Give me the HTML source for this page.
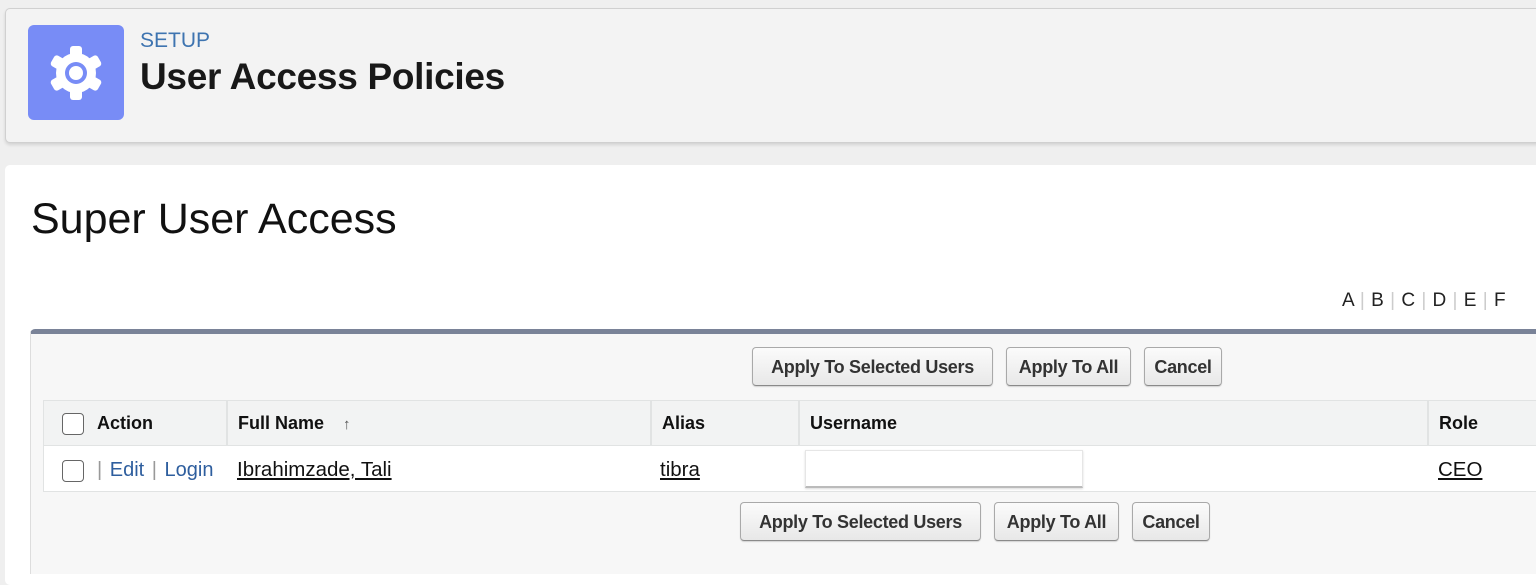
<!DOCTYPE html>
<html><head><style>
body{margin:0;width:1536px;height:561px;background:#efefef;position:relative;overflow:hidden;font-family:"Liberation Sans",Arial,sans-serif;}
.a{position:absolute;}
.btn{position:absolute;height:39px;border:1px solid #a9a9a9;border-bottom-color:#8a8a8a;border-radius:4px;background:linear-gradient(#fbfbfb,#e8e8e8);font-weight:bold;font-size:18px;color:#333;line-height:39px;text-align:center;box-sizing:border-box;letter-spacing:-0.3px;box-shadow:0 1px 1px rgba(0,0,0,.15)}
.cb{position:absolute;width:22px;height:22px;border:1.5px solid #666;border-radius:4px;background:#fff;box-sizing:border-box}
.th{position:absolute;top:400px;height:45px;line-height:45px;font-weight:bold;font-size:18px;color:#111;border-left:2px solid #e1e3e3;padding-left:10px;box-sizing:border-box}
.u{text-decoration:underline;color:#111}
</style></head><body>
<div class="a" style="left:5px;top:8px;width:1560px;height:133px;background:#f3f3f3;border:1px solid #d0d0d0;border-radius:5px;box-shadow:0 2px 3px rgba(0,0,0,.12)"></div>
<div class="a" style="left:28px;top:25px;width:96px;height:95px;background:#788cf6;border-radius:6px">
<svg width="96" height="95" viewBox="0 0 96 95"><g fill="#fff" transform="translate(48,48)">
<circle r="20"/>
<g><rect x="-6" y="-27" width="12" height="14" rx="3"/><rect x="-6" y="-27" width="12" height="14" rx="3" transform="rotate(60)"/><rect x="-6" y="-27" width="12" height="14" rx="3" transform="rotate(120)"/><rect x="-6" y="-27" width="12" height="14" rx="3" transform="rotate(180)"/><rect x="-6" y="-27" width="12" height="14" rx="3" transform="rotate(240)"/><rect x="-6" y="-27" width="12" height="14" rx="3" transform="rotate(300)"/></g>
<circle r="11" fill="#788cf6"/><circle r="7" fill="#fff"/></g></svg></div>
<div class="a" style="left:140px;top:29px;font-size:21px;color:#3e74b0">SETUP</div>
<div class="a" style="left:140px;top:56px;font-size:37px;font-weight:bold;color:#181818;letter-spacing:-0.3px">User Access Policies</div>
<div class="a" style="left:5px;top:165px;width:1560px;height:420px;background:#fff;border-radius:5px"></div>
<div class="a" style="left:31px;top:195px;font-size:43px;color:#111">Super User Access</div>
<div class="a" style="left:1342px;top:290px;font-size:19px;color:#222;word-spacing:1px">A<span style="color:#ccc"> | </span>B<span style="color:#ccc"> | </span>C<span style="color:#ccc"> | </span>D<span style="color:#ccc"> | </span>E<span style="color:#ccc"> | </span>F</div>
<div class="a" style="left:30px;top:329px;width:1540px;height:240px;background:#f7f7f7;border-top:5px solid #7a8398;border-left:1px solid #ddd;border-radius:5px 0 0 0"></div>
<div class="btn" style="left:752px;top:347px;width:241px">Apply To Selected Users</div>
<div class="btn" style="left:1006px;top:347px;width:125px">Apply To All</div>
<div class="btn" style="left:1144px;top:347px;width:78px">Cancel</div>
<div class="a" style="left:43px;top:400px;width:1500px;height:45px;background:#f2f3f3;border-top:1px solid #e1e3e3;border-left:1px solid #e1e3e3"></div>
<div class="a" style="left:43px;top:445px;width:1500px;height:47px;background:#fff;border-top:1px solid #e1e3e3;border-bottom:1px solid #e1e3e3;border-left:1px solid #e1e3e3;box-sizing:border-box"></div>
<div class="cb" style="left:62px;top:413px"></div>
<div class="a" style="left:97px;top:401px;line-height:45px;font-weight:bold;font-size:18px;color:#111">Action</div>
<div class="th" style="left:226px;top:401px">Full Name <span style="font-size:15px;color:#555;margin-left:14px">&#8593;</span></div>
<div class="th" style="left:650px;top:401px">Alias</div>
<div class="th" style="left:798px;top:401px">Username</div>
<div class="th" style="left:1427px;top:401px">Role</div>
<div class="cb" style="left:62px;top:460px"></div>
<div class="a" style="left:97px;top:447px;line-height:46px;font-size:20px;color:#2e5e9e;word-spacing:2px"><span style="color:#999">|</span> Edit <span style="color:#999">|</span> Login</div>
<div class="a u" style="left:237px;top:447px;line-height:46px;font-size:20.5px">Ibrahimzade, Tali</div>
<div class="a u" style="left:660px;top:447px;line-height:46px;font-size:20.5px">tibra</div>
<div class="a" style="left:805px;top:450px;width:278px;height:38px;background:#fff;border:1px solid #e6e6e6;border-bottom:2px solid #bbb;box-sizing:border-box;box-shadow:0 1px 2px rgba(0,0,0,.15)"></div>
<div class="a u" style="left:1438px;top:447px;line-height:46px;font-size:20.5px">CEO</div>
<div class="btn" style="left:740px;top:502px;width:241px">Apply To Selected Users</div>
<div class="btn" style="left:994px;top:502px;width:125px">Apply To All</div>
<div class="btn" style="left:1132px;top:502px;width:78px">Cancel</div>
</body></html>
